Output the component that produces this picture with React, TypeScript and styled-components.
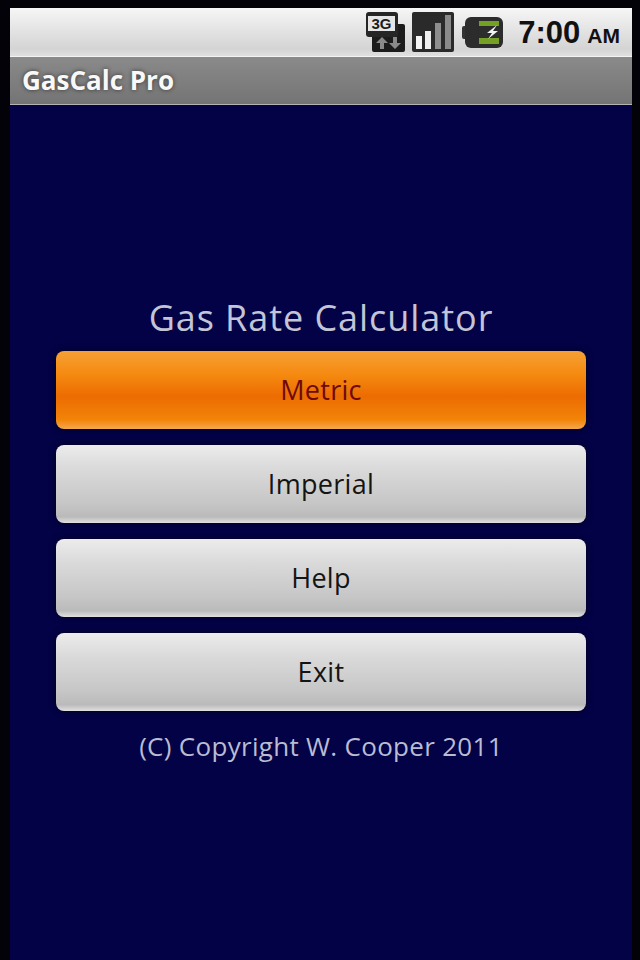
import React from 'react'
import styled, { createGlobalStyle } from 'styled-components'

const GlobalStyle = createGlobalStyle`
  html, body {
    margin: 0;
    padding: 0;
    background: #020208;
  }
`

const Frame = styled.div`
  width: 640px;
  height: 960px;
  box-sizing: border-box;
  padding: 8px 8px 0 10px;
  display: flex;
  flex-direction: column;
  font-family: "Open Sans", "Noto Sans", sans-serif;
  overflow: hidden;
`

const StatusBar = styled.div`
  height: 48px;
  flex: none;
  display: flex;
  align-items: center;
  justify-content: flex-end;
  padding-right: 12px;
  background: linear-gradient(#f6f6f6, #d4d4d4 85%, #e0e0e0);
  border-bottom: 1px solid #f4f4f4;
`

const Clock = styled.div`
  font-family: "Liberation Sans", sans-serif;
  font-size: 31px;
  font-weight: 700;
  color: #111;
  margin-left: 15px;
  line-height: 1;
  small {
    font-size: 21px;
    margin-left: 7px;
  }
`

const StatusIcon = styled.svg`
  display: block;
  flex: none;
  margin-left: 7px;
`

const TitleBar = styled.div`
  height: 48px;
  flex: none;
  display: flex;
  align-items: center;
  box-sizing: border-box;
  padding: 0 0 2px 12px;
  background: linear-gradient(#8a8a8a, #747474);
  border-bottom: 1px solid #b4b4b4;
  color: #f8f8f8;
  font-size: 26px;
  font-weight: 700;
  text-shadow: 0 0 4px #333;
`

const Body = styled.div`
  flex: 1;
  display: flex;
  flex-direction: column;
  align-items: center;
  padding-top: 188px;
  background: #030246;
`

const Heading = styled.div`
  font-size: 36px;
  line-height: 50px;
  color: #c3c5d6;
  letter-spacing: 0.95px;
`

const Menu = styled.div`
  display: flex;
  flex-direction: column;
  gap: 16px;
  margin-top: 8px;
`

const MenuButton = styled.div<{ $active?: boolean }>`
  width: 530px;
  height: 78px;
  box-sizing: border-box;
  border-radius: 8px;
  display: flex;
  align-items: center;
  justify-content: center;
  font-size: 27px;
  letter-spacing: 0.3px;
  padding-bottom: 1px;
  color: ${p => (p.$active ? '#6e0a0a' : '#141414')};
  background: ${p =>
    p.$active
      ? 'linear-gradient(#f6a035, #f58a10 30%, #ec6c02 58%, #f28408 88%, #f6a84c)'
      : 'linear-gradient(#ececec, #dadada 30%, #c6c6c6 75%, #bababa 92%, #e0e0e0)'};
  box-shadow: 0 0 6px rgba(0, 0, 0, 0.6);
`

const Copyright = styled.div`
  font-size: 26px;
  line-height: 38px;
  margin-top: 16px;
  color: #b9bcd2;
  letter-spacing: 0.3px;
`

const NetworkIcon = () => (
  <StatusIcon width="39" height="40" viewBox="0 0 39 40">
    <rect x="6" y="12" width="33" height="28" rx="2" fill="#1c1c1c" />
    <rect x="0" y="0" width="32" height="25" rx="3" fill="#262626" />
    <rect x="2" y="4" width="27" height="15" fill="#e6e6e6" />
    <text x="15.5" y="17" textAnchor="middle" fontFamily="Liberation Sans" fontWeight="700" fontSize="15" fill="#1c1c1c">3G</text>
    <path d="M14 37v-6h-4l6-6 6 6h-4v6z" fill="#8a8a8a" />
    <path d="M27 25h4v6h4l-6 6-6-6h4z" fill="#8a8a8a" />
  </StatusIcon>
)

const BarsIcon = () => (
  <StatusIcon width="42" height="40" viewBox="0 0 42 40">
    <rect width="42" height="40" rx="2" fill="#2a2a2a" />
    <rect x="4" y="24" width="6" height="13" fill="#f4f4f4" />
    <rect x="13" y="19" width="6" height="18" fill="#f0f0f0" />
    <rect x="23" y="11" width="6" height="26" fill="#8e8e8e" />
    <rect x="33" y="3" width="6" height="34" fill="#8a8a8a" />
  </StatusIcon>
)

const BatteryIcon = () => (
  <StatusIcon width="41" height="31" viewBox="0 0 41 31" style={{ marginLeft: 8 }}>
    <rect x="0" y="9" width="5" height="13" rx="2" fill="#333" />
    <rect x="3" y="0" width="38" height="31" rx="6" fill="#2c2c2c" />
    <rect x="17" y="4" width="20" height="5" fill="#74a024" />
    <rect x="17" y="21" width="20" height="6" fill="#74a024" />
    <path d="M35 8l-10 8h5l-4 6 10-8h-5z" fill="#f2f2f2" />
  </StatusIcon>
)

export default function App() {
  return (
    <Frame>
      <GlobalStyle />
      <StatusBar>
        <NetworkIcon />
        <BarsIcon />
        <BatteryIcon />
        <Clock>
          7:00<small>AM</small>
        </Clock>
      </StatusBar>
      <TitleBar>GasCalc Pro</TitleBar>
      <Body>
        <Heading>Gas Rate Calculator</Heading>
        <Menu>
          <MenuButton $active>Metric</MenuButton>
          <MenuButton>Imperial</MenuButton>
          <MenuButton>Help</MenuButton>
          <MenuButton>Exit</MenuButton>
        </Menu>
        <Copyright>(C) Copyright W. Cooper 2011</Copyright>
      </Body>
    </Frame>
  )
}
